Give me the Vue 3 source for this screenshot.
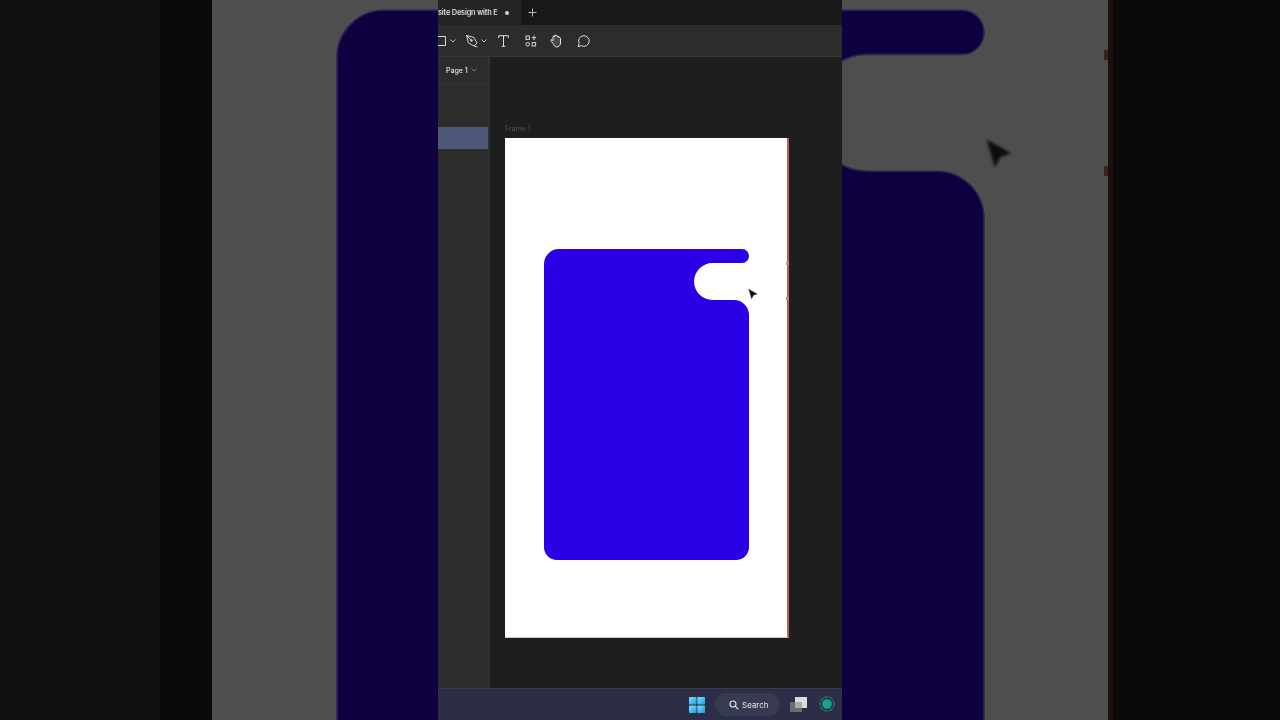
<script setup>
// shape outline shared by the sharp canvas copy and the blurred backdrop copy
const shapePath =
  'M15 0H198A7 7 0 0 1 198 14H168.5A18.5 18.5 0 0 0 168.5 51H190A15 15 0 0 1 205 66V298A13 13 0 0 1 192 311H13A13 13 0 0 1 0 298V15A15 15 0 0 1 15 0Z'
const cursorPath = 'M1 1L16 9.5L9.5 11.5L6 18Z'
</script>

<template>
  <div class="screen">
    <div class="strip strip-far"></div>
    <div class="strip strip-near"></div>
    <div class="backdrop">
      <svg class="back-shape" viewBox="0 0 205 311" width="647" height="982">
        <path :d="shapePath" fill="#0f003f" stroke="#2c2350" stroke-width="0.5" />
      </svg>
      <svg class="back-cursor" viewBox="0 0 17 19" width="28" height="33">
        <path :d="cursorPath" fill="#0c0c0c" />
      </svg>
      <i class="mark mark-a"></i>
      <i class="mark mark-b"></i>
    </div>
    <div class="strip strip-right"></div>

    <div class="video">
      <div class="tabbar">
        <div class="tab">
          <span class="tab-title">site Design with E</span>
          <i class="tab-dot"></i>
        </div>
        <svg class="tab-plus" width="9" height="9" viewBox="0 0 9 9">
          <path d="M4.5 0.5V8.5M0.5 4.5H8.5" stroke="#b4b4b4" stroke-width="1" fill="none" />
        </svg>
      </div>

      <div class="toolbar">
        <svg class="tool tool-frame" width="9" height="12" viewBox="0 0 9 12">
          <path d="M0 1.5H7.5V10.5H0" stroke="#dcdcdc" stroke-width="1" fill="none" />
        </svg>
        <svg class="chev chev-1" width="6" height="4" viewBox="0 0 6 4">
          <path d="M0.5 0.5L3 3L5.5 0.5" stroke="#bdbdbd" fill="none" />
        </svg>
        <svg class="tool tool-pen" width="14" height="14" viewBox="0 0 14 14">
          <path d="M1.5 1.5L9 3.5L12 9L9 12L3.5 9ZM1.5 1.5L6 6M9 12L12.5 13" stroke="#d6d6d6" fill="none" />
          <circle cx="6.5" cy="6.5" r="1.2" fill="#d6d6d6" />
        </svg>
        <svg class="chev chev-2" width="6" height="4" viewBox="0 0 6 4">
          <path d="M0.5 0.5L3 3L5.5 0.5" stroke="#bdbdbd" fill="none" />
        </svg>
        <svg class="tool tool-text" width="11" height="12" viewBox="0 0 11 12">
          <path d="M0.7 3V0.7H10.3V3M5.5 0.7V11.3M3.6 11.3H7.4" stroke="#dedede" fill="none" />
        </svg>
        <svg class="tool tool-res" width="12" height="12" viewBox="0 0 12 12">
          <rect x="1" y="1" width="3.4" height="3.4" stroke="#d6d6d6" fill="none" />
          <path d="M9 0.5V5M6.8 2.7H11.2" stroke="#d6d6d6" fill="none" />
          <circle cx="2.7" cy="9.3" r="1.8" stroke="#d6d6d6" fill="none" />
          <rect x="7.2" y="7.6" width="3.4" height="3.4" stroke="#d6d6d6" fill="none" />
        </svg>
        <svg class="tool tool-hand" width="13" height="14" viewBox="0 0 13 14">
          <path d="M3 9.5L1 6.8C0.4 5.8 1.6 5 2.4 5.9L3 6.6V2.8C3 1.8 4.4 1.8 4.4 2.8V1.8C4.4 0.8 5.9 0.8 5.9 1.8V2.2C5.9 1.3 7.4 1.3 7.4 2.2V3C7.4 2.1 9 2.1 9 3V4C9 3.2 10.5 3.2 10.5 4.2V9C10.5 11.5 9 13 6.6 13C4.8 13 3.8 11 3 9.5Z" fill="#4a4a4a" stroke="#e2e2e2" />
        </svg>
        <svg class="tool tool-comment" width="13" height="13" viewBox="0 0 13 13">
          <path d="M1 12L2.2 8.8A5.3 5.3 0 1 1 4.4 11Z" stroke="#dedede" fill="none" transform="translate(0 -0.3)" />
        </svg>
      </div>

      <div class="workspace">
        <aside class="sidebar">
          <div class="page-row">
            <span>Page 1</span>
            <svg width="6" height="4" viewBox="0 0 6 4">
              <path d="M0.5 0.5L3 3L5.5 0.5" stroke="#7b7b7b" fill="none" />
            </svg>
          </div>
          <div class="layer-selected"></div>
        </aside>
        <main class="canvas">
          <div class="frame-label">Frame 1</div>
          <div class="frame">
            <svg class="shape" viewBox="0 0 205 311" width="205" height="311">
              <path :d="shapePath" fill="#2b00e4" />
            </svg>
            <svg class="cursor" viewBox="0 0 17 19" width="10" height="12">
              <path :d="cursorPath" fill="#111" stroke="#777" stroke-width="0.8" />
            </svg>
            <i class="handle handle-a"></i>
            <i class="handle handle-b"></i>
          </div>
        </main>
      </div>

      <div class="taskbar">
        <svg class="win" width="16" height="16" viewBox="0 0 16 16">
          <defs>
            <linearGradient id="win-blue" x1="0" y1="0" x2="1" y2="1">
              <stop offset="0" stop-color="#7fe0fb" />
              <stop offset="1" stop-color="#1c9bdf" />
            </linearGradient>
          </defs>
          <rect x="0" y="0" width="7.6" height="7.6" rx="0.8" fill="url(#win-blue)" />
          <rect x="8.4" y="0" width="7.6" height="7.6" rx="0.8" fill="url(#win-blue)" />
          <rect x="0" y="8.4" width="7.6" height="7.6" rx="0.8" fill="url(#win-blue)" />
          <rect x="8.4" y="8.4" width="7.6" height="7.6" rx="0.8" fill="url(#win-blue)" />
        </svg>
        <div class="search">
          <svg width="10" height="10" viewBox="0 0 10 10">
            <circle cx="4" cy="4" r="3" stroke="#e8e8e8" stroke-width="1.1" fill="none" />
            <path d="M6.2 6.2L9.3 9.3" stroke="#e8e8e8" stroke-width="1.2" />
          </svg>
          <span>Search</span>
        </div>
        <svg class="taskview" width="17" height="15" viewBox="0 0 17 15">
          <rect x="0" y="5" width="12" height="10" fill="#6b6c74" />
          <rect x="5" y="0" width="12" height="11" fill="#dcdce0" />
          <rect x="5" y="5" width="7" height="6" fill="#a9a9ae" />
        </svg>
        <svg class="ring" width="16" height="16" viewBox="0 0 16 16">
          <circle cx="8" cy="8" r="7" stroke="#2d6e68" stroke-width="1.6" fill="none" stroke-dasharray="4 1" />
          <circle cx="8" cy="8" r="4.8" fill="#11a889" />
        </svg>
      </div>
    </div>
  </div>
</template>

<style>
body {
  margin: 0;
  background: #0a0a0a;
}
</style>

<style scoped>
.screen {
  position: relative;
  display: flex;
  width: 1280px;
  height: 720px;
  overflow: hidden;
  font-family: Inter, "Liberation Sans", sans-serif;
}

.strip {
  flex: none;
}

.strip-far {
  width: 160px;
  background: #0f0f0f;
}

.strip-near {
  width: 52px;
  background: #0a0a0a;
}

.strip-right {
  flex: 1;
  background: #0a0a0a;
}

.backdrop {
  position: relative;
  flex: none;
  width: 901px;
  background: #4e4e4e;
  overflow: hidden;
  box-sizing: border-box;
  border-right: 5px solid #1e0f0d;
}

.back-shape {
  position: absolute;
  left: 125px;
  top: 10px;
  overflow: visible;
}

.back-cursor {
  position: absolute;
  left: 773px;
  top: 137px;
  filter: blur(1.5px);
}

.mark {
  position: absolute;
  right: -2px;
  width: 6px;
  height: 10px;
  background: #3a2220;
}

.mark-a {
  top: 50px;
}

.mark-b {
  top: 166px;
}

.video {
  position: absolute;
  left: 438px;
  top: 0;
  width: 404px;
  height: 720px;
  display: flex;
  flex-direction: column;
  background: #1e1e1e;
  filter: blur(0.4px);
}

.tabbar {
  flex: none;
  height: 25px;
  display: flex;
  align-items: center;
  background: #181818;
}

.tab {
  flex: none;
  width: 83px;
  height: 100%;
  display: flex;
  align-items: center;
  box-sizing: border-box;
  background: #252525;
}

.tab-title {
  flex: none;
  width: 62px;
  font-size: 7.4px;
  font-weight: 600;
  letter-spacing: -0.2px;
  color: #dcdcdc;
  white-space: nowrap;
}

.tab-dot {
  flex: none;
  width: 4px;
  height: 4px;
  margin-left: 5px;
  border-radius: 50%;
  background: #d4d4d4;
}

.tab-plus {
  margin-left: 7px;
}

.toolbar {
  flex: none;
  position: relative;
  height: 32px;
  background: #2c2c2c;
  border-bottom: 1px solid #363636;
  box-sizing: border-box;
}

.tool,
.chev {
  position: absolute;
}

.tool-frame { left: 0; top: 10px; }
.chev-1 { left: 12px; top: 14px; }
.tool-pen { left: 27px; top: 9px; }
.chev-2 { left: 43px; top: 14px; }
.tool-text { left: 60px; top: 10px; }
.tool-res { left: 87px; top: 10px; }
.tool-hand { left: 112px; top: 9px; }
.tool-comment { left: 139px; top: 10px; }

.workspace {
  flex: 1;
  display: flex;
  min-height: 0;
}

.sidebar {
  flex: none;
  width: 50px;
  background: #2c2c2c;
  border-right: 2px solid #313131;
}

.page-row {
  height: 27px;
  display: flex;
  align-items: center;
  gap: 3px;
  padding-left: 8px;
  border-bottom: 1px solid #333;
  box-sizing: border-box;
  font-size: 7px;
  font-weight: 600;
  color: #d4d4d4;
}

.layer-selected {
  height: 22px;
  margin-top: 43px;
  background: #4c5676;
}

.canvas {
  flex: 1;
  padding: 65px 0 0 15px;
  background: #1e1e1e;
}

.frame-label {
  height: 16px;
  font-size: 7px;
  line-height: 14px;
  color: #505050;
}

.frame {
  position: relative;
  width: 284px;
  height: 500px;
  box-sizing: border-box;
  background: #fff;
  border-right: 2px solid #a8665e;
  border-bottom: 1px solid #c8c8c8;
}

.shape {
  position: absolute;
  left: 39px;
  top: 111px;
}

.cursor {
  position: absolute;
  left: 243px;
  top: 150px;
}

.handle {
  position: absolute;
  right: -2px;
  width: 3px;
  height: 3px;
  background: #c98a82;
}

.handle-a {
  top: 124px;
}

.handle-b {
  top: 159px;
}

.taskbar {
  flex: none;
  position: relative;
  height: 32px;
  background: #2c2e48;
  border-top: 1px solid #3a3c54;
  box-sizing: border-box;
}

.win {
  position: absolute;
  left: 251px;
  top: 8px;
}

.search {
  position: absolute;
  left: 277px;
  top: 4px;
  width: 65px;
  height: 23px;
  display: flex;
  align-items: center;
  gap: 3px;
  padding-left: 14px;
  box-sizing: border-box;
  border-radius: 12px;
  background: #373b52;
  font-size: 8px;
  color: #e4e4e8;
}

.taskview {
  position: absolute;
  left: 352px;
  top: 8px;
}

.ring {
  position: absolute;
  left: 381px;
  top: 7px;
}
</style>
